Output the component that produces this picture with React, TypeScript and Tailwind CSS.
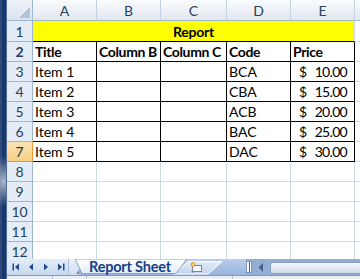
import React from "react";

const GRID = "border-[#d0d7e5]";

function RowHeader({ n, selected }: { n: number; selected?: boolean }) {
  return (
    <div
      className={
        "w-[26px] shrink-0 h-full flex items-end justify-center leading-[19px] border-r border-b " +
        (selected
          ? "bg-gradient-to-b from-[#fbe3b5] to-[#f7cf82] border-[#f29536] text-[#1e3756]"
          : "bg-[#e4ecf7] border-[#9eb6ce] text-[#27415f]")
      }
    >
      {n}
    </div>
  );
}

type RowData = { title: string; code: string; price: string };

const items: RowData[] = [
  { title: "Item 1", code: "BCA", price: "10.00" },
  { title: "Item 2", code: "CBA", price: "15.00" },
  { title: "Item 3", code: "ACB", price: "20.00" },
  { title: "Item 4", code: "BAC", price: "25.00" },
  { title: "Item 5", code: "DAC", price: "30.00" },
];

function EmptyRow({ n }: { n: number }) {
  return (
    <div className="flex h-[20px] shrink-0">
      <RowHeader n={n} />
      <div className={"w-[64px] shrink-0 border-r border-b " + GRID} />
      <div className={"w-[64px] shrink-0 border-r border-b " + GRID} />
      <div className={"w-[66px] shrink-0 border-r border-b " + GRID} />
      <div className={"w-[64px] shrink-0 border-r border-b " + GRID} />
      <div className={"w-[64px] shrink-0 border-r border-b " + GRID} />
      <div className={"flex-1 border-b " + GRID} />
    </div>
  );
}

function Arrow({ dir, bar }: { dir: "l" | "r"; bar?: boolean }) {
  return (
    <svg width="8" height="8" viewBox="0 0 8 8">
      {dir === "l" ? (
        <>
          {bar && <rect x="0.5" y="0.5" width="1.5" height="7" fill="#1f4a8c" />}
          <polygon points={bar ? "7,0.5 7,7.5 3,4" : "6,0.5 6,7.5 2,4"} fill="#1f4a8c" />
        </>
      ) : (
        <>
          <polygon points={bar ? "1,0.5 1,7.5 5,4" : "2,0.5 2,7.5 6,4"} fill="#1f4a8c" />
          {bar && <rect x="6" y="0.5" width="1.5" height="7" fill="#1f4a8c" />}
        </>
      )}
    </svg>
  );
}

export default function App() {
  return (
    <div className="w-[360px] h-[279px] overflow-hidden flex bg-white font-['Lato',sans-serif] text-[14px] text-black">
      {/* window frame */}
      <div className="w-[7px] shrink-0 h-full flex">
        <div className="w-[2px] h-full bg-[linear-gradient(to_bottom,#2e4b7c_0%,#2e4b7c_56%,#9aa8bd_65%,#2e4b7c_74%,#2e4b7c_100%)]" />
        <div className="w-[4px] h-full bg-[linear-gradient(to_bottom,#1b3668_0%,#1b3668_56%,#a9b4c6_65%,#1b3668_74%,#1b3668_100%)]" />
        <div className="w-[1px] h-full bg-[#4f6fa3]" />
      </div>

      <div className="flex-1 flex flex-col min-w-0">
        {/* sheet */}
        <div className="h-[259px] overflow-hidden flex flex-col shrink-0">
          {/* column headers */}
          <div className="flex h-[21px] shrink-0 text-[#27415f]">
            <div className="w-[26px] shrink-0 h-full border-r border-b border-[#9eb6ce] bg-gradient-to-b from-[#eef2f8] to-[#dbe4ef] flex items-end justify-end pr-[2px] pb-[2px]">
              <svg width="12" height="12" viewBox="0 0 12 12">
                <polygon points="12,0 12,12 0,12" fill="#b4c4d8" />
                <polyline points="0,12 12,0" stroke="#f5f8fb" strokeWidth="1" fill="none" />
              </svg>
            </div>
            {[
              ["A", "w-[64px]"],
              ["B", "w-[64px]"],
              ["C", "w-[66px]"],
              ["D", "w-[64px]"],
              ["E", "w-[64px]"],
            ].map(([l, w]) => (
              <div
                key={l}
                className={
                  w +
                  " shrink-0 h-full border-r border-b border-r-[#c3d1e2] border-b-[#9eb6ce] bg-gradient-to-b from-[#f9fafc] to-[#e3e8ef] flex items-end justify-center leading-[19px]"
                }
              >
                {l}
              </div>
            ))}
            <div className="flex-1 h-full border-b border-[#9eb6ce] bg-gradient-to-b from-[#f9fafc] to-[#e3e8ef]" />
          </div>

          {/* row 1 */}
          <div className="flex h-[21px] shrink-0">
            <RowHeader n={1} />
            <div className="w-[322px] shrink-0 bg-[#ffff00] border-r border-r-[#d0d7e5] border-b border-b-black flex items-end justify-center leading-[19px] font-bold tracking-[-0.2px]">
              Report
            </div>
            <div className={"flex-1 border-b " + GRID} />
          </div>

          {/* row 2 */}
          <div className="flex h-[20px] shrink-0 font-bold tracking-[-0.35px]">
            <RowHeader n={2} />
            <div className="w-[64px] shrink-0 border-r border-b border-black pl-[2px] leading-[19px]">Title</div>
            <div className="w-[64px] shrink-0 border-r border-b border-black pl-[2px] leading-[19px] whitespace-nowrap overflow-hidden">Column B</div>
            <div className="w-[66px] shrink-0 border-r border-b border-black pl-[2px] leading-[19px] whitespace-nowrap overflow-hidden">Column C</div>
            <div className="w-[64px] shrink-0 border-r border-b border-black pl-[2px] leading-[19px]">Code</div>
            <div className="w-[64px] shrink-0 border-r border-b border-black pl-[2px] leading-[19px]">Price</div>
            <div className={"flex-1 border-b " + GRID} />
          </div>

          {items.map((it, i) => (
            <div key={it.title} className="flex h-[20px] shrink-0">
              <RowHeader n={i + 3} selected={i === 4} />
              <div className="w-[64px] shrink-0 border-r border-b border-black pl-[2px] leading-[19px]">{it.title}</div>
              <div className="w-[64px] shrink-0 border-r border-b border-black" />
              <div className="w-[66px] shrink-0 border-r border-b border-black" />
              <div className="w-[64px] shrink-0 border-r border-b border-black pl-[2px] leading-[19px]">{it.code}</div>
              <div className="w-[64px] shrink-0 border-r border-b border-black pl-[8px] pr-[7px] leading-[19px] flex justify-between">
                <span>$</span>
                <span className="tracking-[-0.7px]">{it.price}</span>
              </div>
              <div className={"flex-1 border-b " + GRID} />
            </div>
          ))}

          {[8, 9, 10, 11, 12].map((n) => (
            <EmptyRow key={n} n={n} />
          ))}
        </div>

        {/* tab bar */}
        <div className="h-[16px] shrink-0 flex">
          <div className="w-[61px] shrink-0 h-full bg-gradient-to-b from-[#e3edf9] to-[#c6d8ef] flex items-center pl-[5px] gap-[7px]">
            <Arrow dir="l" bar />
            <Arrow dir="l" />
            <Arrow dir="r" />
            <Arrow dir="r" bar />
          </div>
          <div className="w-[178px] shrink-0 h-full relative bg-gradient-to-b from-[#b7cdea] to-[#9ab6de]">
            <svg className="absolute inset-0" width="178" height="16" viewBox="0 0 178 16">
              <defs>
                <linearGradient id="tabg" x1="0" y1="0" x2="0" y2="1">
                  <stop offset="0" stopColor="#ffffff" />
                  <stop offset="1" stopColor="#e4ecf6" />
                </linearGradient>
                <linearGradient id="newg" x1="0" y1="0" x2="0" y2="1">
                  <stop offset="0" stopColor="#e2ecf8" />
                  <stop offset="1" stopColor="#c2d6ef" />
                </linearGradient>
                <linearGradient id="sepg" x1="0" y1="0" x2="0" y2="1">
                  <stop offset="0" stopColor="#eaf1fa" />
                  <stop offset="1" stopColor="#cfdef1" />
                </linearGradient>
              </defs>
              <rect x="0" y="0" width="11" height="16" fill="url(#sepg)" />
              <line x1="0.5" y1="0" x2="0.5" y2="16" stroke="#a9bfdc" />
              <polygon points="106,15 120,2.5 154,2.5 140,15" fill="url(#newg)" stroke="#ffffff" strokeWidth="1" />
              <polygon points="7,0 119,0 108,14.5 14,14.5" fill="url(#tabg)" stroke="#8aa3c6" strokeWidth="1" />
              <polygon points="8,15 11,15 11,11" fill="#6d89b3" />
              {/* new sheet icon */}
              <rect x="124.5" y="6.5" width="9" height="6" fill="#f7f9fc" stroke="#6f86a8" />
              <rect x="123.5" y="12" width="3" height="1.5" fill="#6f86a8" />
              <circle cx="125" cy="5.5" r="2.4" fill="#f0a030" />
              <circle cx="125" cy="5.5" r="1.1" fill="#ffe08a" />
            </svg>
            <span className="absolute left-[21px] top-0 leading-[16px] font-bold text-[14.5px] tracking-[-0.2px] text-[#15428b] whitespace-nowrap">
              Report Sheet
            </span>
          </div>
          <div className="w-[6px] shrink-0 h-full bg-[#93aed4] flex items-center">
            <div className="w-[6px] h-[12px] bg-[#f6f9fc] border border-[#7d97bd] flex justify-center">
              <div className="w-[1px] h-full bg-[#3f5f8f]" />
            </div>
          </div>
          <div className="w-[18px] shrink-0 h-full bg-[#93aed4] flex items-center justify-center">
            <svg width="6" height="9" viewBox="0 0 6 9">
              <polygon points="5,0 5,9 0.5,4.5" fill="#45638f" />
            </svg>
          </div>
          <div className="flex-1 h-full bg-[#93aed4] pt-[3px] pb-[1px]">
            <div className="h-full rounded-l-[2px] border border-r-0 border-[#869dbf] bg-gradient-to-b from-[#f5f8fc] to-[#d2dcea]" />
          </div>
        </div>
        <div className="h-[1px] shrink-0 bg-[#7f9bc3]" />
        <div className="flex-1 flex bg-[#e9eef4]">
          <div className="w-[46px] border-r border-[#b3c2d6]" />
          <div className="w-[34px] border-r border-[#b3c2d6]" />
          <div className="w-[146px] border-r border-[#b3c2d6]" />
          <div className="flex-1" />
        </div>
      </div>
    </div>
  );
}
